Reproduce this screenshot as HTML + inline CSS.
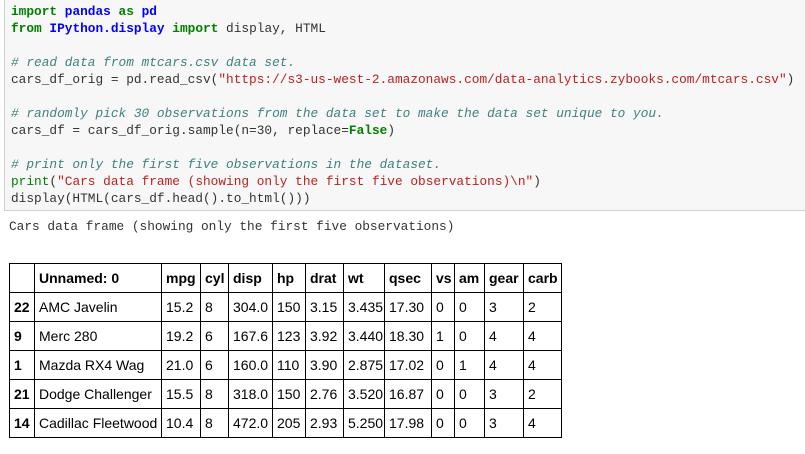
<!DOCTYPE html>
<html><head><meta charset="utf-8"><style>
body{margin:0;width:805px;height:454px;background:#fff;overflow:hidden;position:relative}
.code{position:absolute;left:4px;top:-1px;width:810px;height:212px;background:#f7f7f7;border:1px solid #cfcfcf;box-sizing:border-box}
pre{margin:0;font-family:"Liberation Mono",monospace;font-size:12.8px;line-height:17px;color:#333}
.code pre{position:absolute;left:6px;top:3px}
.k{color:#008000;font-weight:bold}.n{color:#0000ff;font-weight:bold}.c{color:#408080;font-style:italic}.s{color:#ba2121}
.out{position:absolute;left:9px;top:218px}
table{position:absolute;left:9px;top:263px;border-collapse:collapse;table-layout:fixed;font-family:"Liberation Sans",Arial,sans-serif;font-size:14px;color:#000}
td,th{border:1px solid #000;height:29px;padding:0 0 0 4px;text-align:left;white-space:nowrap;overflow:hidden;box-sizing:border-box}
th{font-weight:bold}
</style></head><body>
<div class="code"><pre><span class="k">import</span> <span class="n">pandas</span> <span class="k">as</span> <span class="n">pd</span>
<span class="k">from</span> <span class="n">IPython.display</span> <span class="k">import</span> display, HTML

<span class="c"># read data from mtcars.csv data set.</span>
cars_df_orig = pd.read_csv(<span class="s">"https://s3-us-west-2.amazonaws.com/data-analytics.zybooks.com/mtcars.csv"</span>)

<span class="c"># randomly pick 30 observations from the data set to make the data set unique to you.</span>
cars_df = cars_df_orig.sample(n=30, replace=<span class="k">False</span>)

<span class="c"># print only the first five observations in the dataset.</span>
<span class="k" style="font-weight:normal">print</span>(<span class="s">"Cars data frame (showing only the first five observations)\n"</span>)
display(HTML(cars_df.head().to_html()))</pre></div>
<pre class="out">Cars data frame (showing only the first five observations)</pre>
<table>
<colgroup><col style="width:25px"><col style="width:127px"><col style="width:39px"><col style="width:28px"><col style="width:44px"><col style="width:33px"><col style="width:38px"><col style="width:41px"><col style="width:47px"><col style="width:23px"><col style="width:30px"><col style="width:39px"><col style="width:38px"></colgroup>
<tr><th></th><th>Unnamed: 0</th><th>mpg</th><th>cyl</th><th>disp</th><th>hp</th><th>drat</th><th>wt</th><th>qsec</th><th>vs</th><th>am</th><th>gear</th><th>carb</th></tr>
<tr><th>22</th><td>AMC Javelin</td><td>15.2</td><td>8</td><td>304.0</td><td>150</td><td>3.15</td><td>3.435</td><td>17.30</td><td>0</td><td>0</td><td>3</td><td>2</td></tr>
<tr><th>9</th><td>Merc 280</td><td>19.2</td><td>6</td><td>167.6</td><td>123</td><td>3.92</td><td>3.440</td><td>18.30</td><td>1</td><td>0</td><td>4</td><td>4</td></tr>
<tr><th>1</th><td>Mazda RX4 Wag</td><td>21.0</td><td>6</td><td>160.0</td><td>110</td><td>3.90</td><td>2.875</td><td>17.02</td><td>0</td><td>1</td><td>4</td><td>4</td></tr>
<tr><th>21</th><td>Dodge Challenger</td><td>15.5</td><td>8</td><td>318.0</td><td>150</td><td>2.76</td><td>3.520</td><td>16.87</td><td>0</td><td>0</td><td>3</td><td>2</td></tr>
<tr><th>14</th><td>Cadillac Fleetwood</td><td>10.4</td><td>8</td><td>472.0</td><td>205</td><td>2.93</td><td>5.250</td><td>17.98</td><td>0</td><td>0</td><td>3</td><td>4</td></tr>
</table>
</body></html>
